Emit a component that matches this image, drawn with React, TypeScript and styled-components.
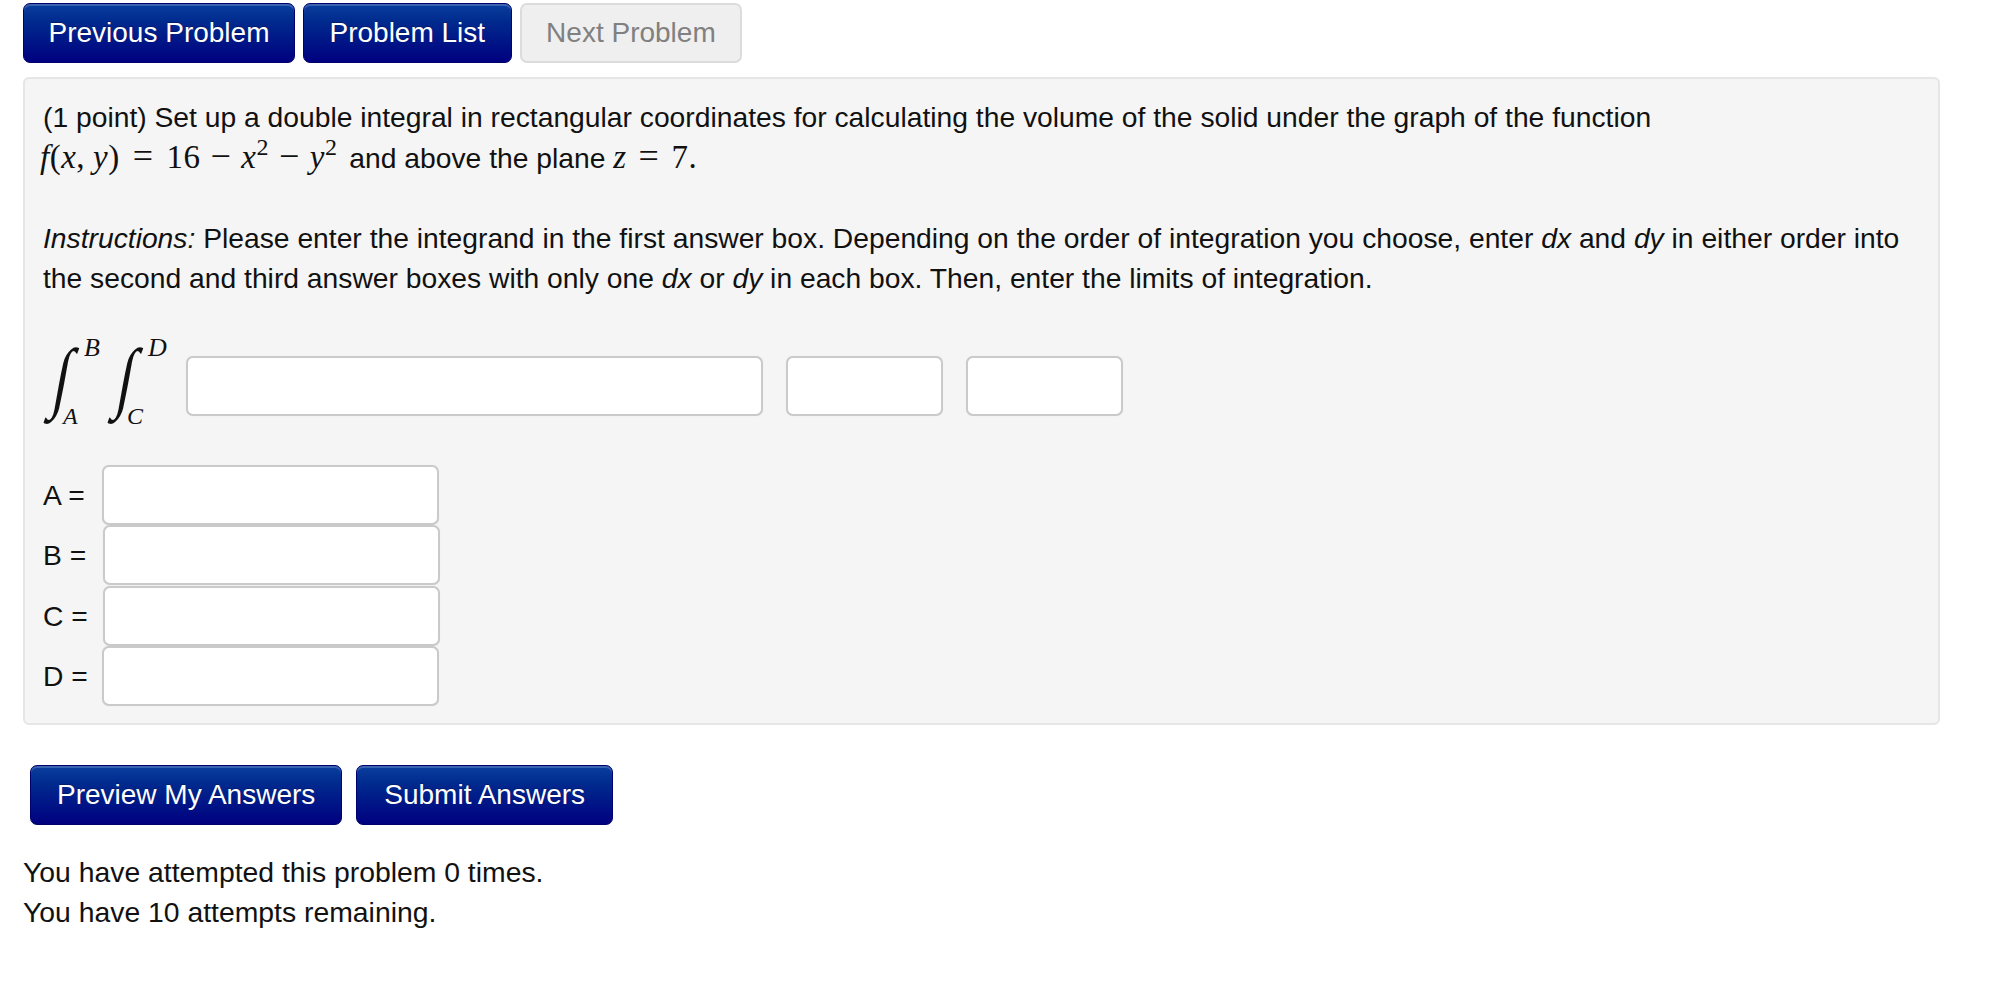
import React from "react";
import styled, { createGlobalStyle, css } from "styled-components";

const GlobalStyle = createGlobalStyle`
  html, body {
    margin: 0;
    padding: 0;
    background: #fff;
  }
  body {
    font-family: "Liberation Sans", Arial, sans-serif;
    font-size: 28.35px;
    line-height: 40px;
    color: #111;
  }
`;

const Page = styled.div`
  width: 2014px;
  height: 988px;
  padding: 3px 0 0 23px;
  box-sizing: border-box;
  overflow: hidden;
`;

const Nav = styled.nav`
  display: flex;
  gap: 8px;
`;

const Button = styled.button<{ disabled?: boolean; pad?: number }>`
  height: 60px;
  padding: 0 ${(props) => props.pad ?? 26}px;
  box-sizing: border-box;
  font-family: inherit;
  font-size: 28px;
  line-height: 40px;
  border-radius: 7px;
  white-space: nowrap;
  ${(props) =>
    props.disabled
      ? css`
          color: #808080;
          background: #efefef;
          border: 2px solid #dcdcdc;
        `
      : css`
          color: #fff;
          border: 1px solid #00006e;
          background: linear-gradient(#0a3f9e, #002a8e 30%, #00007f);
          box-shadow: inset 0 2px 0 rgba(255, 255, 255, 0.2);
          text-shadow: 0 -1px 0 rgba(0, 0, 0, 0.25);
        `}
`;

const Well = styled.section`
  width: 1917px;
  height: 648px;
  margin-top: 14px;
  padding: 18px 18px 0;
  box-sizing: border-box;
  font-size: 28.25px;
  background: #f5f5f5;
  border: 2px solid #e6e6e6;
  border-radius: 6px;
`;

const Paragraph = styled.p`
  margin: 0 0 40px;
`;

const MathLine = styled.span`
  display: block;
  margin-left: -3px;
`;

const MathText = styled.span<{ trail?: number }>`
  margin-right: ${(props) => props.trail ?? 0}px;
  font-family: "Liberation Serif", "Times New Roman", serif;
  font-size: 33px;
  letter-spacing: 0.5px;
`;

const Op = styled.span<{ gap: number }>`
  margin: 0 ${(props) => props.gap}px;
  font-size: 36px;
  line-height: 0;
`;

const Comma = styled.span`
  margin-right: 8px;
`;

const Sup = styled.sup`
  font-size: 24px;
  line-height: 0;
  vertical-align: 13px;
`;

const IntegralRow = styled.div`
  display: flex;
  align-items: flex-start;
  height: 108px;
  padding: 3px 0 0 3px;
`;

const Integral = styled.div`
  display: flex;
  width: 64px;
  height: 92px;
  margin-top: -5px;
  font-family: "Liberation Serif", "Times New Roman", serif;
`;

const Sign = styled.span`
  width: 17px;
  font-size: 58px;
  line-height: 92px;
  font-style: italic;
  transform: translate(9px, -5px) scale(1, 1.35) skewX(-14deg);
  transform-origin: 50% 50%;
`;

const Limits = styled.span`
  display: flex;
  flex-direction: column;
  justify-content: space-between;
  font-style: italic;
  font-size: 24px;
  line-height: 24px;
`;

const Upper = styled.span`
  margin-left: 21px;
  font-size: 26px;
`;

const Field = styled.input<{ w: number }>`
  width: ${(props) => props.w}px;
  height: 60px;
  box-sizing: border-box;
  background: #fff;
  border: 2px solid #cacaca;
  border-radius: 7px;
  box-shadow: 0 0 1px rgba(0, 0, 0, 0.1);
  outline: none;
`;

const Blanks = styled.div`
  display: flex;
  gap: 23px;
  margin: 15px 0 0 12px;
`;

const Limit = styled.div`
  display: flex;
  align-items: center;
  height: 60.3px;
`;

const LimitLabel = styled.label<{ w: number }>`
  width: ${(props) => props.w}px;
`;

const LimitList = styled.div`
  margin-top: 16px;
`;

const ActionBar = styled.div`
  display: flex;
  gap: 14px;
  margin: 40px 0 0 7px;
`;

const Attempts = styled.p`
  margin: 27px 0 0;
`;

const limits = [
  { name: "A", w: 59 },
  { name: "B", w: 60 },
  { name: "C", w: 60 },
  { name: "D", w: 59 },
];

export default function App() {
  return (
    <Page>
      <GlobalStyle />
      <Nav>
        <Button pad={24.5}>Previous Problem</Button>
        <Button pad={25.5}>Problem List</Button>
        <Button disabled pad={24.5}>
          Next Problem
        </Button>
      </Nav>

      <Well>
        <Paragraph>
          (1 point) Set up a double integral in rectangular coordinates for calculating the volume
          of the solid under the graph of the function
          <MathLine>
            <MathText trail={4}>
              <i>f</i>(<i>x</i>
              <Comma>,</Comma>
              <i>y</i>)<Op gap={13}>=</Op>16<Op gap={10}>−</Op>
              <i>x</i>
              <Sup>2</Sup>
              <Op gap={10}>−</Op>
              <i>y</i>
              <Sup>2</Sup>
            </MathText>{" "}
            and above the plane{" "}
            <MathText>
              <i>z</i>
              <Op gap={12}>=</Op>7.
            </MathText>
          </MathLine>
        </Paragraph>

        <Paragraph>
          <i>Instructions:</i> Please enter the integrand in the first answer box. Depending on the
          order of integration you choose, enter <i>dx</i> and <i>dy</i> in either order into the
          second and third answer boxes with only one <i>dx</i> or <i>dy</i> in each box. Then,
          enter the limits of integration.
        </Paragraph>

        <IntegralRow>
          <Integral>
            <Sign>∫</Sign>
            <Limits>
              <Upper>B</Upper>
              <span>A</span>
            </Limits>
          </Integral>
          <Integral>
            <Sign>∫</Sign>
            <Limits>
              <Upper>D</Upper>
              <span>C</span>
            </Limits>
          </Integral>
          <Blanks>
            <Field w={577} />
            <Field w={157} />
            <Field w={157} />
          </Blanks>
        </IntegralRow>

        <LimitList>
          {limits.map((limit) => (
            <Limit key={limit.name}>
              <LimitLabel w={limit.w}>{limit.name} =</LimitLabel>
              <Field w={337} />
            </Limit>
          ))}
        </LimitList>
      </Well>

      <ActionBar>
        <Button>Preview My Answers</Button>
        <Button pad={27}>Submit Answers</Button>
      </ActionBar>

      <Attempts>
        You have attempted this problem 0 times.
        <br />
        You have 10 attempts remaining.
      </Attempts>
    </Page>
  );
}
